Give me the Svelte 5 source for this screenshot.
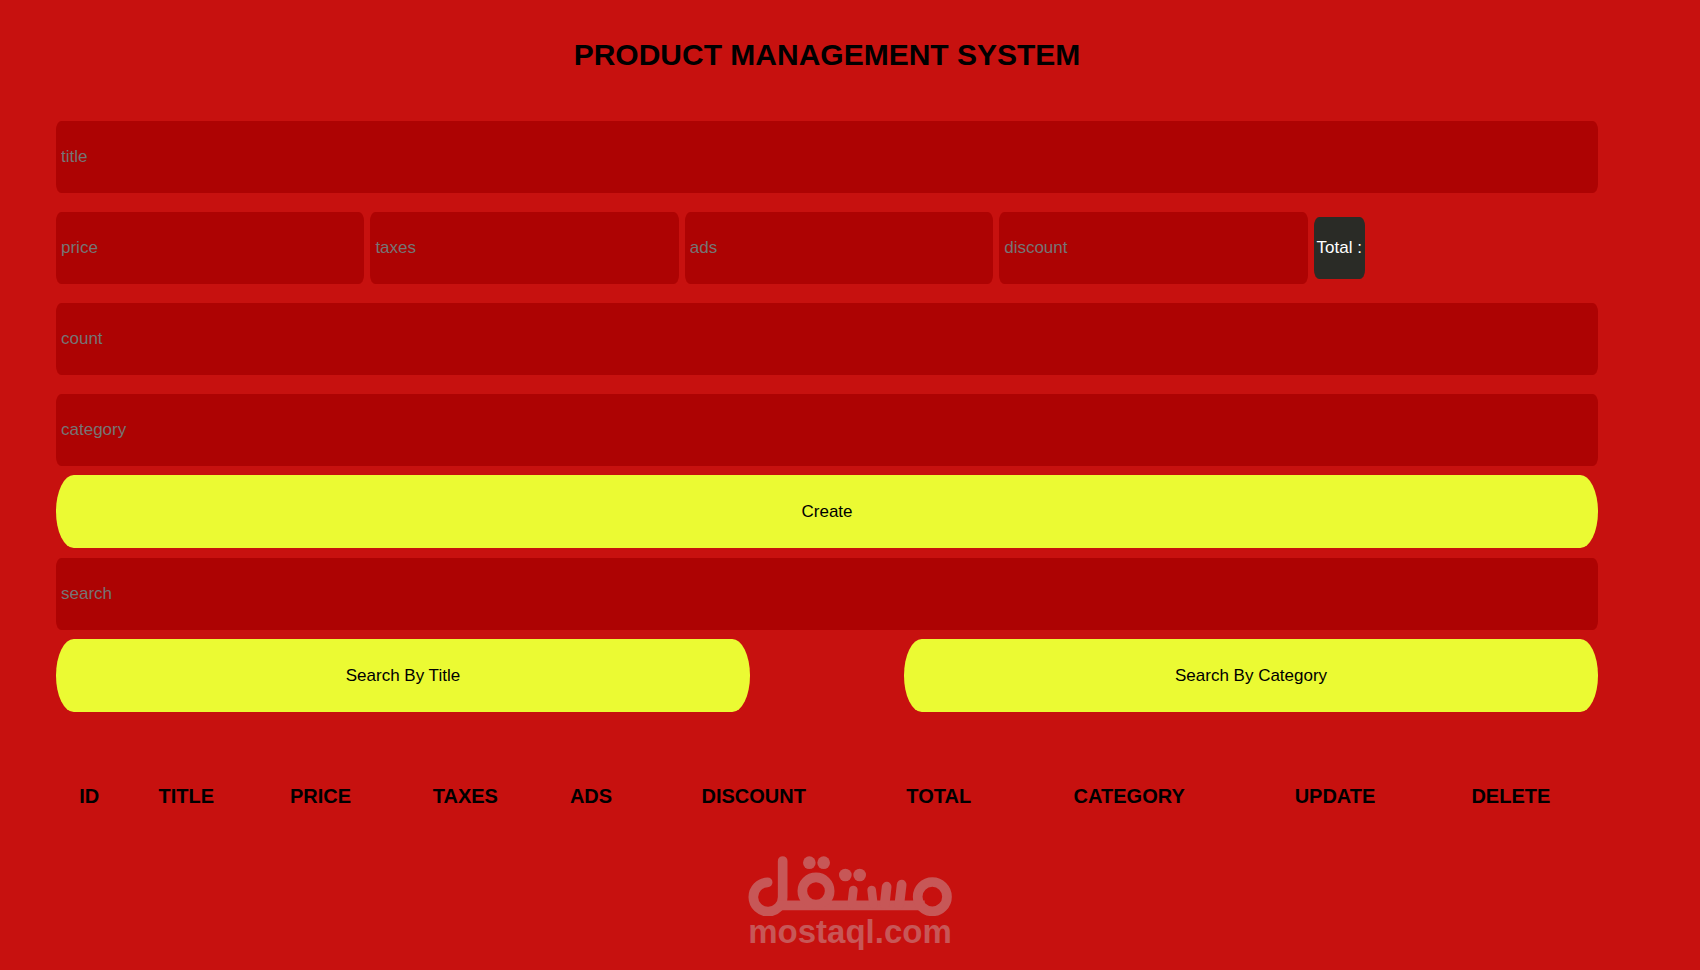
<script>
  const columns = [
    {label: 'id', width: 4.3},
    {label: 'title', width: 8.3},
    {label: 'price', width: 9.1},
    {label: 'taxes', width: 9.7},
    {label: 'ads', width: 6.6},
    {label: 'discount', width: 14.5},
    {label: 'total', width: 9.5},
    {label: 'category', width: 15.2},
    {label: 'update', width: 11.5},
    {label: 'delete', width: 11.3}
  ];

  const costs = $state( {price: null, taxes: null, ads: null, discount: null} );

  let title = $state( '' );
  let count = $state( null );
  let category = $state( '' );
  let search = $state( '' );
  let products = $state( [] );

  let total = $derived.by( () => {
    if( !costs.price ) {
      return '';
    }

    return costs.price + ( costs.taxes ?? 0 ) + ( costs.ads ?? 0 ) - ( costs.discount ?? 0 );
  } );

  let field = $state( 'title' );
  let shown = $derived( products.filter( ( product ) => product[field].includes( search ) ) );

  function create( event ) {
    event.preventDefault();

    if( title === '' || !costs.price ) {
      return;
    }

    for( let i = 0; i < ( count || 1 ); i++ ) {
      products.push( {title, ...costs, total, category} );
    }
  }

  function remove( product ) {
    products = products.filter( ( item ) => item !== product );
  }

  function edit( product ) {
    title = product.title;
    category = product.category;
    for( const name in costs ) {
      costs[name] = product[name];
    }
  }
</script>

<main>
  <h1>PRODUCT MANAGEMENT SYSTEM</h1>

  <form onsubmit={create}>
    <div class="fields">
      <input type="text" placeholder="title" aria-label="title" bind:value={title}>
      <div class="costs">
        {#each Object.keys( costs ) as name}
          <input type="number" placeholder={name} aria-label={name} bind:value={costs[name]}>
        {/each}
        <output>Total : {total}</output>
      </div>
      <input type="number" placeholder="count" aria-label="count" bind:value={count}>
      <input type="text" placeholder="category" aria-label="category" bind:value={category}>
    </div>
    <button type="submit">Create</button>
  </form>

  <section class="search">
    <input type="text" placeholder="search" aria-label="search" bind:value={search}>
    <div class="modes">
      <button type="button" onclick={() => field = 'title'}>Search By Title</button>
      <button type="button" onclick={() => field = 'category'}>Search By Category</button>
    </div>
  </section>

  <table>
    <colgroup>
      {#each columns as column}
        <col style:width="{column.width}%">
      {/each}
    </colgroup>
    <thead>
      <tr>
        {#each columns as column}
          <th scope="col">{column.label}</th>
        {/each}
      </tr>
    </thead>
    <tbody>
      {#each shown as product, i}
        <tr>
          <td>{i + 1}</td>
          <td>{product.title}</td>
          <td>{product.price}</td>
          <td>{product.taxes}</td>
          <td>{product.ads}</td>
          <td>{product.discount}</td>
          <td>{product.total}</td>
          <td>{product.category}</td>
          <td><button type="button" onclick={() => edit( product )}>update</button></td>
          <td><button type="button" onclick={() => remove( product )}>delete</button></td>
        </tr>
      {/each}
    </tbody>
  </table>
</main>

<footer>
  <svg viewBox="0 0 612 180" width="204" height="60" role="img" aria-label="مستقل">
    <g fill="none" stroke="currentColor" stroke-width="29" stroke-linecap="round">
      <path d="M59 79 A44 44 0 1 0 104 122 V15" />
      <path d="M90 148 H530" stroke-linecap="butt" />
      <circle cx="204" cy="105" r="41" />
      <circle cx="553" cy="122" r="44" />
      <path d="M316 102 L311 145" stroke-width="26" />
      <path d="M371 102 L376 145" stroke-width="26" />
      <path d="M416 92 L410 145" stroke-width="29" />
      <path d="M461 86 L454 145" stroke-width="29" />
    </g>
    <g fill="currentColor">
      <circle cx="184" cy="20" r="19" />
      <circle cx="227" cy="20" r="19" />
      <circle cx="292" cy="57" r="19" />
      <circle cx="335" cy="57" r="19" />
    </g>
  </svg>
  <span>mostaql.com</span>
</footer>

<style>
  :global(body) {
    background: #c7110f;
    color: #000;
    font-family: 'Liberation Sans', Arial, sans-serif;
    margin: 0;
  }

  main {
    padding: 23px 6% 0 56px;
  }

  h1 {
    font-size: 30px;
    line-height: 64px;
    margin: 0 0 34px 0;
    text-align: center;
  }

  form, .search {
    display: flex;
    flex-direction: column;
    gap: 9px;
  }

  .fields {
    display: flex;
    flex-direction: column;
    gap: 19px;
  }

  input {
    appearance: textfield;
    background: #ad0303;
    border: none;
    border-radius: 5px / 9px;
    box-sizing: border-box;
    color: #fff;
    font-family: inherit;
    font-size: 17px;
    height: 72px;
    outline: none;
    padding: 0 5px;
    width: 100%;
  }

  input::placeholder {
    color: #757575;
  }

  .costs {
    align-items: center;
    display: flex;
    gap: 6px;
  }

  .costs input {
    width: 20%;
  }

  output {
    background: #2a2b26;
    border-radius: 5px / 9px;
    color: #fff;
    font-size: 17px;
    line-height: 62px;
    padding: 0 3px;
  }

  button {
    background: #ebfa33;
    border: none;
    border-radius: 18px / 37px;
    color: #000;
    cursor: pointer;
    font-family: inherit;
    font-size: 17px;
    height: 73px;
    padding: 0;
    width: 100%;
  }

  .search {
    margin: 10px 0 0 0;
  }

  .modes {
    display: flex;
    justify-content: space-between;
  }

  .modes button {
    width: 45%;
  }

  table {
    border-collapse: collapse;
    margin: 52px 0 0 0;
    table-layout: fixed;
    text-align: center;
    width: 100%;
  }

  th {
    font-size: 20px;
    line-height: 64px;
    padding: 0;
    text-transform: uppercase;
  }

  td {
    font-size: 17px;
    padding: 0 4px;
  }

  footer {
    align-items: center;
    color: #c75757;
    display: flex;
    flex-direction: column;
    padding: 28px 0 16px 0;
  }

  footer svg {
    display: block;
  }

  footer span {
    font-size: 33px;
    font-weight: 700;
    line-height: 32px;
  }
</style>
